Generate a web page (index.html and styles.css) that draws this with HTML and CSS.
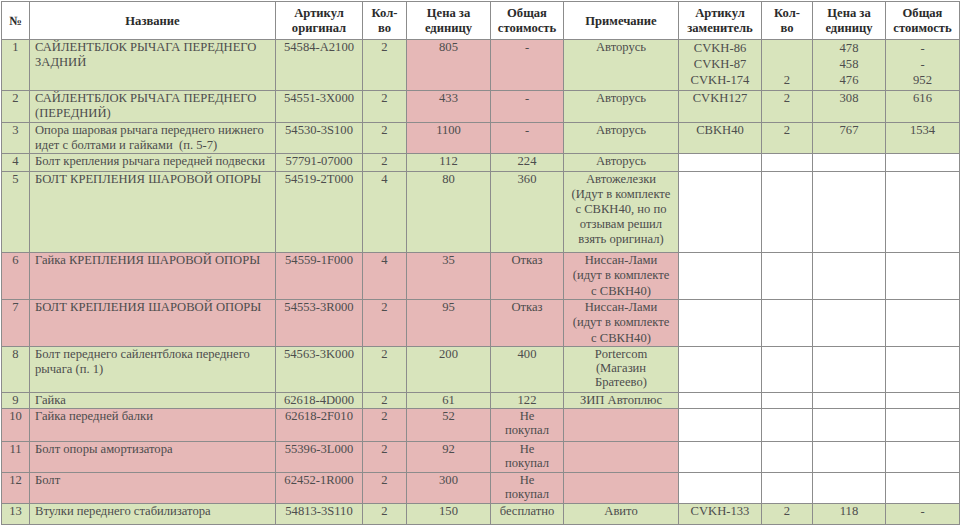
FILE: index.html
```html
<!DOCTYPE html>
<html lang="ru">
<head>
<meta charset="utf-8">
<title>Запчасти</title>
<link rel="stylesheet" href="styles.css">
</head>
<body>
<table class="parts">
  <colgroup>
    <col class="c-num"><col class="c-name"><col class="c-art"><col class="c-qty"><col class="c-price"><col class="c-total"><col class="c-note"><col class="c-art2"><col class="c-qty2"><col class="c-price2"><col class="c-total2">
  </colgroup>
  <thead>
    <tr class="h-head">
      <th>№</th><th>Название</th><th>Артикул<br>оригинал</th><th>Кол-<br>во</th><th>Цена за<br>единицу</th><th>Общая<br>стоимость</th><th>Примечание</th><th>Артикул<br>заменитель</th><th>Кол-<br>во</th><th>Цена за<br>единицу</th><th>Общая<br>стоимость</th>
    </tr>
  </thead>
  <tbody>
    <tr class="h-r1">
      <td class="g">1</td><td class="g name">САЙЛЕНТБЛОК РЫЧАГА ПЕРЕДНЕГО<br>ЗАДНИЙ</td><td class="g">54584-A2100</td><td class="g">2</td><td class="p">805</td><td class="p">-</td><td class="g">Авторусь</td><td class="g loose">CVKH-86<br>CVKH-87<br>CVKH-174</td><td class="g loose"><br><br>2</td><td class="g loose">478<br>458<br>476</td><td class="g loose">-<br>-<br>952</td>
    </tr>
    <tr class="h-r2">
      <td class="g">2</td><td class="g name">САЙЛЕНТБЛОК РЫЧАГА ПЕРЕДНЕГО<br>(ПЕРЕДНИЙ)</td><td class="g">54551-3X000</td><td class="g">2</td><td class="p">433</td><td class="p">-</td><td class="g">Авторусь</td><td class="g">CVKH127</td><td class="g">2</td><td class="g">308</td><td class="g">616</td>
    </tr>
    <tr class="h-r3">
      <td class="g">3</td><td class="g name">Опора шаровая рычага переднего нижнего<br>идет с болтами и гайками&nbsp; (п. 5-7)</td><td class="g">54530-3S100</td><td class="g">2</td><td class="p">1100</td><td class="p">-</td><td class="g">Авторусь</td><td class="g">CBKH40</td><td class="g">2</td><td class="g">767</td><td class="g">1534</td>
    </tr>
    <tr class="h-r4">
      <td class="g">4</td><td class="g name">Болт крепления рычага передней подвески</td><td class="g">57791-07000</td><td class="g">2</td><td class="g">112</td><td class="g">224</td><td class="g">Авторусь</td><td></td><td></td><td></td><td></td>
    </tr>
    <tr class="h-r5">
      <td class="g">5</td><td class="g name">БОЛТ КРЕПЛЕНИЯ ШАРОВОЙ ОПОРЫ</td><td class="g">54519-2T000</td><td class="g">4</td><td class="g">80</td><td class="g">360</td><td class="g">Автожелезки<br>(Идут в комплекте<br>с СВКН40, но по<br>отзывам решил<br>взять оригинал)</td><td></td><td></td><td></td><td></td>
    </tr>
    <tr class="h-r6">
      <td class="p">6</td><td class="p name">Гайка КРЕПЛЕНИЯ ШАРОВОЙ ОПОРЫ</td><td class="p">54559-1F000</td><td class="p">4</td><td class="p">35</td><td class="p">Отказ</td><td class="p mid">Ниссан-Лами<br>(идут в комплекте<br>с СВКН40)</td><td></td><td></td><td></td><td></td>
    </tr>
    <tr class="h-r7">
      <td class="p">7</td><td class="p name">БОЛТ КРЕПЛЕНИЯ ШАРОВОЙ ОПОРЫ</td><td class="p">54553-3R000</td><td class="p">2</td><td class="p">95</td><td class="p">Отказ</td><td class="p mid">Ниссан-Лами<br>(идут в комплекте<br>с СВКН40)</td><td></td><td></td><td></td><td></td>
    </tr>
    <tr class="h-r8">
      <td class="g">8</td><td class="g name">Болт переднего сайлентблока переднего<br>рычага (п. 1)</td><td class="g">54563-3K000</td><td class="g">2</td><td class="g">200</td><td class="g">400</td><td class="g tight">Portercom<br>(Магазин<br>Братеево)</td><td></td><td></td><td></td><td></td>
    </tr>
    <tr class="h-r9">
      <td class="g">9</td><td class="g name">Гайка</td><td class="g">62618-4D000</td><td class="g">2</td><td class="g">61</td><td class="g">122</td><td class="g">ЗИП Автоплюс</td><td></td><td></td><td></td><td></td>
    </tr>
    <tr class="h-r10">
      <td class="p">10</td><td class="p name">Гайка передней балки</td><td class="p">62618-2F010</td><td class="p">2</td><td class="p">52</td><td class="p tight">Не<br>покупал</td><td class="p"></td><td></td><td></td><td></td><td></td>
    </tr>
    <tr class="h-r11">
      <td class="p">11</td><td class="p name">Болт опоры амортизатора</td><td class="p">55396-3L000</td><td class="p">2</td><td class="p">92</td><td class="p tight">Не<br>покупал</td><td class="p"></td><td></td><td></td><td></td><td></td>
    </tr>
    <tr class="h-r12">
      <td class="p">12</td><td class="p name">Болт</td><td class="p">62452-1R000</td><td class="p">2</td><td class="p">300</td><td class="p tight">Не<br>покупал</td><td class="p"></td><td></td><td></td><td></td><td></td>
    </tr>
    <tr class="h-r13">
      <td class="g">13</td><td class="g name">Втулки переднего стабилизатора</td><td class="g">54813-3S110</td><td class="g">2</td><td class="g">150</td><td class="g">бесплатно</td><td class="g">Авито</td><td class="g">CVKH-133</td><td class="g">2</td><td class="g">118</td><td class="g">-</td>
    </tr>
  </tbody>
</table>
</body>
</html>
```

FILE: styles.css
```css
html, body {
  margin: 0;
  padding: 0;
  background: #ffffff;
}

body {
  font-family: "Liberation Serif", "Times New Roman", serif;
  font-size: 12.6px;
  color: #4d4d4d;
}

.parts {
  margin: 1px 0 0 1px;
  border-collapse: collapse;
  table-layout: fixed;
  width: 958px;
}

.c-num { width: 28px; }
.c-name { width: 246px; }
.c-art { width: 87px; }
.c-qty { width: 44px; }
.c-price { width: 84px; }
.c-total { width: 73px; }
.c-note { width: 115px; }
.c-art2 { width: 83px; }
.c-qty2 { width: 51px; }
.c-price2 { width: 73px; }
.c-total2 { width: 74px; }

.parts th,
.parts td {
  border: 1px solid #8c8c8c;
  padding: 0 2px;
  text-align: center;
  line-height: 15px;
  overflow: hidden;
}

.parts th {
  font-weight: bold;
  color: #2b2b2b;
  vertical-align: middle;
  line-height: 15px;
  padding-top: 1px;
}

.parts td {
  vertical-align: top;
}

.parts td.name {
  text-align: left;
  padding-left: 5px;
}

.g { background: #d8e4bc; }
.p { background: #e6b8b7; }

.parts td.tight { line-height: 14px; }
.parts td.mid { line-height: 15.3px; }
.parts td.loose { line-height: 16px; }

.h-head { height: 38px; }
.h-r1 { height: 51px; }
.h-r2 { height: 32px; }
.h-r3 { height: 31px; }
.h-r4 { height: 18px; }
.h-r5 { height: 81px; }
.h-r6 { height: 47px; }
.h-r7 { height: 47px; }
.h-r8 { height: 46px; }
.h-r9 { height: 16px; }
.h-r10 { height: 33px; }
.h-r11 { height: 31px; }
.h-r12 { height: 31px; }
.h-r13 { height: 21px; }
```
